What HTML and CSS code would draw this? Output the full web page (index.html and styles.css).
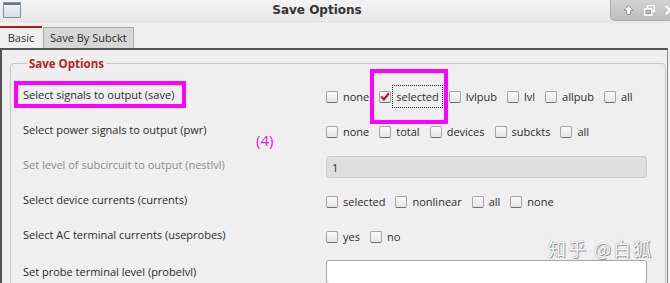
FILE: index.html
```html
<!DOCTYPE html>
<html lang="en">
<head>
<meta charset="utf-8">
<title>Save Options</title>
<link rel="stylesheet" href="styles.css">
</head>
<body>
<div class="window">
  <header class="titlebar">
    <span class="app-icon">
      <svg width="18" height="16" viewBox="0 0 18 16">
        <defs>
          <linearGradient id="ig" x1="0" y1="0" x2="0" y2="1">
            <stop offset="0" stop-color="#f4f6f9"/>
            <stop offset="1" stop-color="#d6dce4"/>
          </linearGradient>
        </defs>
        <rect x="0.5" y="0.5" width="17" height="15" fill="url(#ig)" stroke="#8a8f96"/>
        <rect x="1" y="1" width="16" height="2" fill="#6d7680"/>
      </svg>
    </span>
    <h1 class="title">Save Options</h1>
    <div class="wm-buttons">
      <svg class="wm-icon" width="11" height="10" viewBox="0 0 11 10">
        <path d="M5.5 0.8 L10.2 5.2 H7.4 V9.3 H3.6 V5.2 H0.8 Z" fill="#fff" stroke="#8c8c8c" stroke-width="0.9"/>
      </svg>
      <svg class="wm-icon" width="11" height="11" viewBox="0 0 11 11">
        <rect x="3.5" y="0.5" width="7" height="6" fill="none" stroke="#fff" stroke-width="1.4"/>
        <rect x="0.7" y="3.7" width="7" height="6.6" fill="#c8c8c8" stroke="#fff" stroke-width="1.4"/>
        <rect x="2.2" y="5.6" width="4" height="3" fill="none" stroke="#8c8c8c" stroke-width="0.8"/>
      </svg>
      <svg class="wm-icon" width="10" height="10" viewBox="0 0 10 10">
        <path d="M1 1 L9 9 M9 1 L1 9" stroke="#fff" stroke-width="2.2"/>
      </svg>
    </div>
  </header>

  <nav class="tabs">
    <span class="tab tab-active">Basic</span>
    <span class="tab">Save By Subckt</span>
  </nav>

  <main class="pane">
    <fieldset class="group">
      <legend class="group-title">Save Options</legend>
      <div class="form">
        <div class="label"><span class="mark mark-label">Select signals to output (save)</span></div>
        <div class="controls">
          <label class="opt"><span class="cb"></span>none</label>
          <label class="opt mark mark-opt"><span class="cb cb-on"><svg width="10" height="9" viewBox="0 0 10 9"><path d="M1.2 4.6 L3.9 7.4 L8.9 1.3" fill="none" stroke="#c8102e" stroke-width="2.2"/></svg></span><span class="focus">selected</span></label>
          <label class="opt"><span class="cb"></span>lvlpub</label>
          <label class="opt"><span class="cb"></span>lvl</label>
          <label class="opt"><span class="cb"></span>allpub</label>
          <label class="opt"><span class="cb"></span>all</label>
        </div>

        <div class="label">Select power signals to output (pwr)</div>
        <div class="controls">
          <label class="opt"><span class="cb"></span>none</label>
          <label class="opt"><span class="cb"></span>total</label>
          <label class="opt"><span class="cb"></span>devices</label>
          <label class="opt"><span class="cb"></span>subckts</label>
          <label class="opt"><span class="cb"></span>all</label>
        </div>

        <div class="label label-disabled">Set level of subcircuit to output (nestlvl)</div>
        <div class="controls">
          <div class="field field-disabled">1</div>
        </div>

        <div class="label">Select device currents (currents)</div>
        <div class="controls">
          <label class="opt"><span class="cb"></span>selected</label>
          <label class="opt"><span class="cb"></span>nonlinear</label>
          <label class="opt"><span class="cb"></span>all</label>
          <label class="opt"><span class="cb"></span>none</label>
        </div>

        <div class="label">Select AC terminal currents (useprobes)</div>
        <div class="controls">
          <label class="opt"><span class="cb"></span>yes</label>
          <label class="opt"><span class="cb"></span>no</label>
        </div>

        <div class="label label-last">Set probe terminal level (probelvl)</div>
        <div class="controls">
          <div class="field field-white"></div>
        </div>
      </div>
      <span class="note">(4)</span>
    </fieldset>
    <span class="watermark">知乎 @白狐</span>
  </main>
</div>
</body>
</html>
```
FILE: styles.css
```css
html, body {
  margin: 0;
  padding: 0;
  overflow: hidden;
}
body {
  background: #efefef;
  font-family: "Open Sans", "Noto Sans", sans-serif;
  font-size: 11px;
  color: #2b2b2b;
}
.window {
  width: 670px;
  height: 283px;
  overflow: hidden;
  position: relative;
}

/* title bar */
.titlebar {
  height: 23px;
  display: flex;
  align-items: flex-start;
  background: linear-gradient(#f3f3f3, #e6e6e6);
}
.app-icon {
  width: 18px;
  height: 16px;
  margin: 2px 3px 0 3px;
  display: block;
}
.app-icon svg { display: block; }
.title {
  flex: 1;
  margin: 0;
  text-align: center;
  font-family: "DejaVu Sans", sans-serif;
  font-weight: bold;
  font-size: 12px;
  line-height: 21px;
  color: #333;
}
.wm-buttons {
  width: 60px;
  height: 21px;
  box-sizing: border-box;
  flex: none;
  display: flex;
  align-items: center;
  gap: 10px;
  padding-left: 12px;
  background: linear-gradient(#d2d2d2, #bdbdbd);
  border-left: 1px solid #a9a9a9;
  border-bottom: 1px solid #a9a9a9;
  border-bottom-left-radius: 5px;
}
.wm-icon { display: block; flex: none; }

/* tabs */
.tabs {
  height: 25px;
  display: flex;
  align-items: flex-end;
}
.tab {
  box-sizing: border-box;
  height: 21px;
  padding: 0 6px;
  line-height: 20px;
  background: #d7d7d7;
  border: 1px solid #adadad;
  border-bottom: none;
  margin-left: 1px;
}
.tab-active {
  height: 22px;
  width: 42px;
  margin-left: 0;
  text-align: center;
  background: #efefef;
  border: none;
  border-top: 2px solid #b2191e;
  padding: 0;
}

/* pane */
.pane {
  position: relative;
  height: 235px;
  box-sizing: border-box;
  border-top: 2px solid #545454;
  border-left: 2px solid #545454;
  border-right: 1px solid #8a8a8a;
  width: 668px;
  padding: 6px 0 0 8px;
}
.group {
  position: relative;
  margin: 0;
  padding: 8px 0 20px 12px;
  border: 1px solid #c6c6c6;
  border-radius: 4px;
  width: 656px;
  box-sizing: border-box;
}
.group-title {
  margin-left: 4px;
  padding: 0 2px;
  font-weight: bold;
  font-size: 11.5px;
  color: #b3241f;
}
.form {
  display: grid;
  grid-template-columns: 303px 321px;
  grid-auto-rows: 35px;
  align-items: center;
}
.label {
  padding-bottom: 5px;
}
.label-disabled { color: #8c8c8c; }
.label-last { padding-bottom: 0; }
.controls {
  display: flex;
  align-items: center;
  gap: 10px;
}
.opt {
  display: flex;
  align-items: center;
  white-space: nowrap;
}
.cb {
  width: 12px;
  height: 12px;
  box-sizing: border-box;
  margin-right: 5px;
  border: 1px solid #a3a3a3;
  border-bottom-color: #6f6f6f;
  border-radius: 2px;
  background: linear-gradient(#fbfbfb, #e4e4e4);
  display: flex;
  align-items: center;
  justify-content: center;
}
.cb svg { display: block; }
.focus {
  outline: 1px dotted #222;
  outline-offset: 3px;
}
.field {
  width: 321px;
  box-sizing: border-box;
  padding-left: 5px;
  border-radius: 3px;
}
.field-disabled {
  height: 22px;
  line-height: 21px;
  background: #dedede;
  border: 1px solid #cdcdcd;
  color: #333;
}
.field-white {
  height: 24px;
  background: #fff;
  border: 1px solid #a6a6a6;
}

/* annotation overlays */
.mark { position: relative; }
.mark::after {
  content: "";
  position: absolute;
  border: 4px solid #ff00ff;
}
.mark-label::after {
  left: -9px;
  right: -12px;
  top: -6px;
  bottom: -6px;
}
.mark-opt::after {
  left: -9px;
  right: -9px;
  top: -20px;
  bottom: -20px;
}
.note {
  position: absolute;
  left: 245px;
  top: 59px;
  font-size: 15px;
  color: #e020d8;
}
.watermark {
  position: absolute;
  left: 546px;
  top: 185px;
  font-family: "Noto Sans CJK SC", sans-serif;
  font-size: 18px;
  color: #fff;
  text-shadow: 0 0 1px #777, 1px 1px 0 #999;
  letter-spacing: 2px;
}
```
